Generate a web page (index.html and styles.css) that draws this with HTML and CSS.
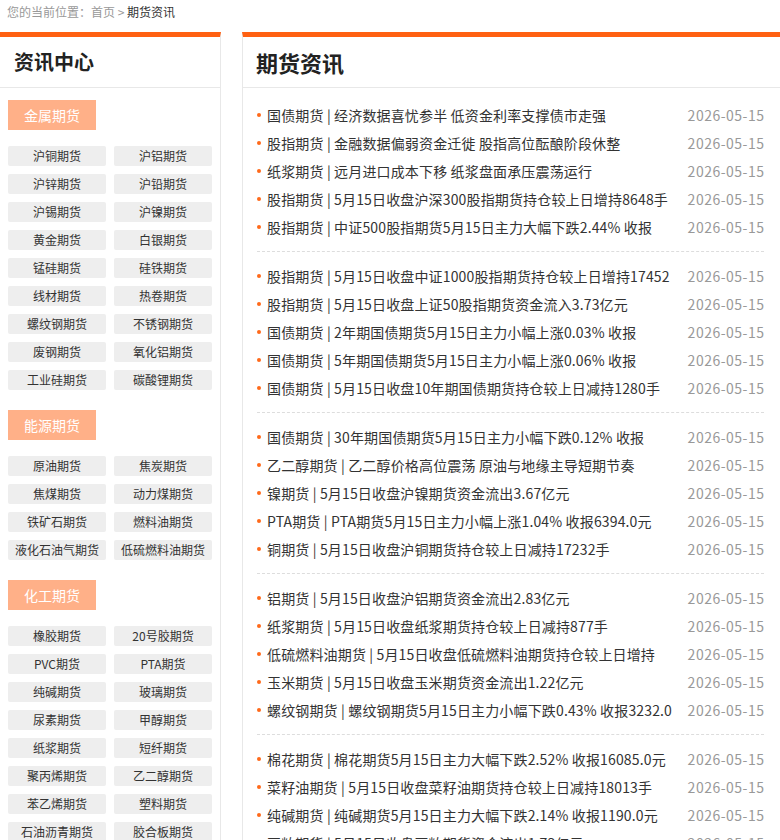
FILE: index.html
```html
<!DOCTYPE html>
<html lang="zh-CN">
<head>
    <meta charset="UTF-8">
    <meta name="viewport" content="width=device-width, initial-scale=1.0">
    <title>期货资讯</title>
    <link rel="stylesheet" href="styles.css">
</head>
<body>
    <div class="crumb">您的当前位置：<a href="#">首页</a> &gt; <span class="crumb-cur">期货资讯</span></div>

    <div class="wrap">
        <aside class="side">
            <h2 class="panel-title">资讯中心</h2>
            <div class="side-body">
                <div class="cat">金属期货</div>
                <ul class="cat-list">
                    <li><a href="#">沪铜期货</a></li>
                    <li><a href="#">沪铝期货</a></li>
                    <li><a href="#">沪锌期货</a></li>
                    <li><a href="#">沪铅期货</a></li>
                    <li><a href="#">沪锡期货</a></li>
                    <li><a href="#">沪镍期货</a></li>
                    <li><a href="#">黄金期货</a></li>
                    <li><a href="#">白银期货</a></li>
                    <li><a href="#">锰硅期货</a></li>
                    <li><a href="#">硅铁期货</a></li>
                    <li><a href="#">线材期货</a></li>
                    <li><a href="#">热卷期货</a></li>
                    <li><a href="#">螺纹钢期货</a></li>
                    <li><a href="#">不锈钢期货</a></li>
                    <li><a href="#">废钢期货</a></li>
                    <li><a href="#">氧化铝期货</a></li>
                    <li><a href="#">工业硅期货</a></li>
                    <li><a href="#">碳酸锂期货</a></li>
                </ul>

                <div class="cat">能源期货</div>
                <ul class="cat-list">
                    <li><a href="#">原油期货</a></li>
                    <li><a href="#">焦炭期货</a></li>
                    <li><a href="#">焦煤期货</a></li>
                    <li><a href="#">动力煤期货</a></li>
                    <li><a href="#">铁矿石期货</a></li>
                    <li><a href="#">燃料油期货</a></li>
                    <li><a href="#">液化石油气期货</a></li>
                    <li><a href="#">低硫燃料油期货</a></li>
                </ul>

                <div class="cat">化工期货</div>
                <ul class="cat-list">
                    <li><a href="#">橡胶期货</a></li>
                    <li><a href="#">20号胶期货</a></li>
                    <li><a href="#">PVC期货</a></li>
                    <li><a href="#">PTA期货</a></li>
                    <li><a href="#">纯碱期货</a></li>
                    <li><a href="#">玻璃期货</a></li>
                    <li><a href="#">尿素期货</a></li>
                    <li><a href="#">甲醇期货</a></li>
                    <li><a href="#">纸浆期货</a></li>
                    <li><a href="#">短纤期货</a></li>
                    <li><a href="#">聚丙烯期货</a></li>
                    <li><a href="#">乙二醇期货</a></li>
                    <li><a href="#">苯乙烯期货</a></li>
                    <li><a href="#">塑料期货</a></li>
                    <li><a href="#">石油沥青期货</a></li>
                    <li><a href="#">胶合板期货</a></li>
                </ul>
            </div>
        </aside>

        <main class="news">
            <h2 class="panel-title title-lg">期货资讯</h2>
            <div class="news-body">
                <ul class="news-group">
                    <li><a href="#">国债期货 | 经济数据喜忧参半 低资金利率支撑债市走强</a><span class="date">2026-05-15</span></li>
                    <li><a href="#">股指期货 | 金融数据偏弱资金迁徙 股指高位酝酿阶段休整</a><span class="date">2026-05-15</span></li>
                    <li><a href="#">纸浆期货 | 远月进口成本下移 纸浆盘面承压震荡运行</a><span class="date">2026-05-15</span></li>
                    <li><a href="#">股指期货 | 5月15日收盘沪深300股指期货持仓较上日增持8648手</a><span class="date">2026-05-15</span></li>
                    <li><a href="#">股指期货 | 中证500股指期货5月15日主力大幅下跌2.44% 收报</a><span class="date">2026-05-15</span></li>
                </ul>
                <ul class="news-group">
                    <li><a href="#">股指期货 | 5月15日收盘中证1000股指期货持仓较上日增持17452</a><span class="date">2026-05-15</span></li>
                    <li><a href="#">股指期货 | 5月15日收盘上证50股指期货资金流入3.73亿元</a><span class="date">2026-05-15</span></li>
                    <li><a href="#">国债期货 | 2年期国债期货5月15日主力小幅上涨0.03% 收报</a><span class="date">2026-05-15</span></li>
                    <li><a href="#">国债期货 | 5年期国债期货5月15日主力小幅上涨0.06% 收报</a><span class="date">2026-05-15</span></li>
                    <li><a href="#">国债期货 | 5月15日收盘10年期国债期货持仓较上日减持1280手</a><span class="date">2026-05-15</span></li>
                </ul>
                <ul class="news-group">
                    <li><a href="#">国债期货 | 30年期国债期货5月15日主力小幅下跌0.12% 收报</a><span class="date">2026-05-15</span></li>
                    <li><a href="#">乙二醇期货 | 乙二醇价格高位震荡 原油与地缘主导短期节奏</a><span class="date">2026-05-15</span></li>
                    <li><a href="#">镍期货 | 5月15日收盘沪镍期货资金流出3.67亿元</a><span class="date">2026-05-15</span></li>
                    <li><a href="#">PTA期货 | PTA期货5月15日主力小幅上涨1.04% 收报6394.0元</a><span class="date">2026-05-15</span></li>
                    <li><a href="#">铜期货 | 5月15日收盘沪铜期货持仓较上日减持17232手</a><span class="date">2026-05-15</span></li>
                </ul>
                <ul class="news-group">
                    <li><a href="#">铝期货 | 5月15日收盘沪铝期货资金流出2.83亿元</a><span class="date">2026-05-15</span></li>
                    <li><a href="#">纸浆期货 | 5月15日收盘纸浆期货持仓较上日减持877手</a><span class="date">2026-05-15</span></li>
                    <li><a href="#">低硫燃料油期货 | 5月15日收盘低硫燃料油期货持仓较上日增持</a><span class="date">2026-05-15</span></li>
                    <li><a href="#">玉米期货 | 5月15日收盘玉米期货资金流出1.22亿元</a><span class="date">2026-05-15</span></li>
                    <li><a href="#">螺纹钢期货 | 螺纹钢期货5月15日主力小幅下跌0.43% 收报3232.0</a><span class="date">2026-05-15</span></li>
                </ul>
                <ul class="news-group">
                    <li><a href="#">棉花期货 | 棉花期货5月15日主力大幅下跌2.52% 收报16085.0元</a><span class="date">2026-05-15</span></li>
                    <li><a href="#">菜籽油期货 | 5月15日收盘菜籽油期货持仓较上日减持18013手</a><span class="date">2026-05-15</span></li>
                    <li><a href="#">纯碱期货 | 纯碱期货5月15日主力大幅下跌2.14% 收报1190.0元</a><span class="date">2026-05-15</span></li>
                    <li><a href="#">豆粕期货 | 5月15日收盘豆粕期货资金流出1.73亿元</a><span class="date">2026-05-15</span></li>
                    <li><a href="#">豆油期货 | 5月15日收盘豆油期货持仓较上日增持5256手</a><span class="date">2026-05-15</span></li>
                </ul>
            </div>
        </main>
    </div>
</body>
</html>
```

FILE: styles.css
```css
body {
    margin: 0;
    padding: 0;
    font-family: "Noto Sans CJK SC", "Noto Sans", sans-serif;
    background: #fff;
    color: #333;
    overflow-x: hidden;
}

ul {
    list-style: none;
    margin: 0;
    padding: 0;
}

a {
    text-decoration: none;
    color: inherit;
}

.crumb {
    height: 32px;
    line-height: 24px;
    padding-left: 7px;
    font-size: 12px;
    color: #999;
}

.crumb-cur {
    color: #333;
}

.wrap {
    display: flex;
    align-items: flex-start;
    gap: 21px;
}

.side,
.news {
    border-top: 5px solid #ff6112;
    background: #fff;
}

.side {
    flex: 0 0 220px;
    border-right: 1px solid #e8e8e8;
}

.news {
    flex: 1;
    border-left: 1px solid #e8e8e8;
}

.panel-title {
    margin: 0;
    height: 50px;
    line-height: 50px;
    padding-left: 14px;
    font-size: 20px;
    font-weight: bold;
    color: #222;
    border-bottom: 1px solid #e8e8e8;
}

.title-lg {
    padding-left: 13px;
    font-size: 22px;
}

/* left column: category tags + link grid */
.side-body {
    padding: 12px 8px 0;
}

.cat {
    width: 88px;
    height: 30px;
    line-height: 30px;
    text-align: center;
    background: #ffb088;
    color: #fff;
    font-size: 14px;
}

.cat-list {
    display: grid;
    grid-template-columns: 98px 98px;
    gap: 8px;
    margin: 16px 0 20px;
}

.cat-list li a {
    display: block;
    height: 20px;
    line-height: 20px;
    text-align: center;
    background: #eee;
    border-radius: 2px;
    font-size: 12px;
    color: #333;
    white-space: nowrap;
}

/* news list */
.news-body {
    padding: 3px 16px 0 14px;
}

.news-group {
    padding: 10px 0;
    border-bottom: 1px dashed #ddd;
}

.news-group li {
    display: flex;
    align-items: center;
    height: 28px;
    font-size: 14px;
}

.news-group li::before {
    content: "";
    flex: 0 0 4px;
    height: 4px;
    margin-right: 6px;
    border-radius: 50%;
    background: #ff6a1a;
}

.news-group li a {
    flex: 1;
    overflow: hidden;
    white-space: nowrap;
    color: #333;
    letter-spacing: 0.15px;
}

.news-group .date {
    margin-left: 8px;
    margin-right: -0.5px;
    color: #999;
    letter-spacing: 0.5px;
}
```
